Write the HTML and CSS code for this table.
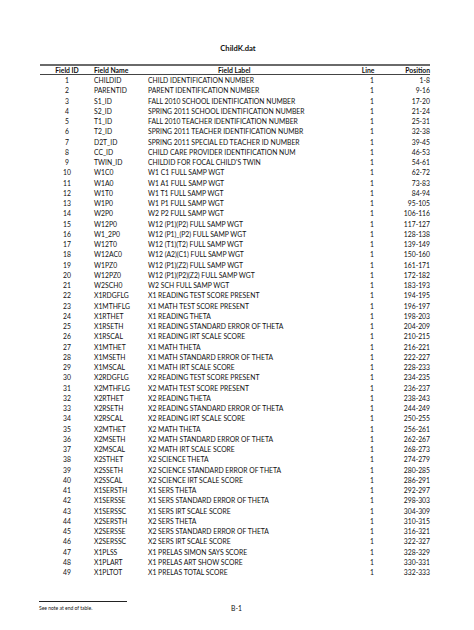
FILE: index.html
```html
<!DOCTYPE html>
<html>
<head>
<meta charset="utf-8">
<link rel="stylesheet" href="styles.css">
</head>
<body>
<div class="page">
  <h1 class="title">ChildK.dat</h1>
  <table class="layout">
    <colgroup>
      <col class="c-id"><col class="c-name"><col class="c-label"><col class="c-line"><col class="c-pos">
    </colgroup>
    <thead>
      <tr><th class="id">Field ID</th><th class="name">Field Name</th><th class="label">Field Label</th><th class="line">Line</th><th class="pos">Position</th></tr>
    </thead>
    <tbody>
      <tr><td class="id">1</td><td class="name">CHILDID</td><td class="label">CHILD IDENTIFICATION NUMBER</td><td class="line">1</td><td class="pos">1-8</td></tr>
      <tr><td class="id">2</td><td class="name">PARENTID</td><td class="label">PARENT IDENTIFICATION NUMBER</td><td class="line">1</td><td class="pos">9-16</td></tr>
      <tr><td class="id">3</td><td class="name">S1_ID</td><td class="label">FALL 2010 SCHOOL IDENTIFICATION NUMBER</td><td class="line">1</td><td class="pos">17-20</td></tr>
      <tr><td class="id">4</td><td class="name">S2_ID</td><td class="label">SPRING 2011 SCHOOL IDENTIFICATION NUMBER</td><td class="line">1</td><td class="pos">21-24</td></tr>
      <tr><td class="id">5</td><td class="name">T1_ID</td><td class="label">FALL 2010 TEACHER IDENTIFICATION NUMBER</td><td class="line">1</td><td class="pos">25-31</td></tr>
      <tr><td class="id">6</td><td class="name">T2_ID</td><td class="label">SPRING 2011 TEACHER IDENTIFICATION NUMBR</td><td class="line">1</td><td class="pos">32-38</td></tr>
      <tr><td class="id">7</td><td class="name">D2T_ID</td><td class="label">SPRING 2011 SPECIAL ED TEACHER ID NUMBER</td><td class="line">1</td><td class="pos">39-45</td></tr>
      <tr><td class="id">8</td><td class="name">CC_ID</td><td class="label">CHILD CARE PROVIDER IDENTIFICATION NUM</td><td class="line">1</td><td class="pos">46-53</td></tr>
      <tr><td class="id">9</td><td class="name">TWIN_ID</td><td class="label">CHILDID FOR FOCAL CHILD'S TWIN</td><td class="line">1</td><td class="pos">54-61</td></tr>
      <tr><td class="id">10</td><td class="name">W1C0</td><td class="label">W1 C1 FULL SAMP WGT</td><td class="line">1</td><td class="pos">62-72</td></tr>
      <tr><td class="id">11</td><td class="name">W1A0</td><td class="label">W1 A1 FULL SAMP WGT</td><td class="line">1</td><td class="pos">73-83</td></tr>
      <tr><td class="id">12</td><td class="name">W1T0</td><td class="label">W1 T1 FULL SAMP WGT</td><td class="line">1</td><td class="pos">84-94</td></tr>
      <tr><td class="id">13</td><td class="name">W1P0</td><td class="label">W1 P1 FULL SAMP WGT</td><td class="line">1</td><td class="pos">95-105</td></tr>
      <tr><td class="id">14</td><td class="name">W2P0</td><td class="label">W2 P2 FULL SAMP WGT</td><td class="line">1</td><td class="pos">106-116</td></tr>
      <tr><td class="id">15</td><td class="name">W12P0</td><td class="label">W12 (P1)(P2) FULL SAMP WGT</td><td class="line">1</td><td class="pos">117-127</td></tr>
      <tr><td class="id">16</td><td class="name">W1_2P0</td><td class="label">W12 (P1)_(P2) FULL SAMP WGT</td><td class="line">1</td><td class="pos">128-138</td></tr>
      <tr><td class="id">17</td><td class="name">W12T0</td><td class="label">W12 (T1)(T2) FULL SAMP WGT</td><td class="line">1</td><td class="pos">139-149</td></tr>
      <tr><td class="id">18</td><td class="name">W12AC0</td><td class="label">W12 (A2)(C1) FULL SAMP WGT</td><td class="line">1</td><td class="pos">150-160</td></tr>
      <tr><td class="id">19</td><td class="name">W1PZ0</td><td class="label">W12 (P1)(Z2) FULL SAMP WGT</td><td class="line">1</td><td class="pos">161-171</td></tr>
      <tr><td class="id">20</td><td class="name">W12PZ0</td><td class="label">W12 (P1)(P2)(Z2) FULL SAMP WGT</td><td class="line">1</td><td class="pos">172-182</td></tr>
      <tr><td class="id">21</td><td class="name">W2SCH0</td><td class="label">W2 SCH FULL SAMP WGT</td><td class="line">1</td><td class="pos">183-193</td></tr>
      <tr><td class="id">22</td><td class="name">X1RDGFLG</td><td class="label">X1 READING TEST SCORE PRESENT</td><td class="line">1</td><td class="pos">194-195</td></tr>
      <tr><td class="id">23</td><td class="name">X1MTHFLG</td><td class="label">X1 MATH TEST SCORE PRESENT</td><td class="line">1</td><td class="pos">196-197</td></tr>
      <tr><td class="id">24</td><td class="name">X1RTHET</td><td class="label">X1 READING THETA</td><td class="line">1</td><td class="pos">198-203</td></tr>
      <tr><td class="id">25</td><td class="name">X1RSETH</td><td class="label">X1 READING STANDARD ERROR OF THETA</td><td class="line">1</td><td class="pos">204-209</td></tr>
      <tr><td class="id">26</td><td class="name">X1RSCAL</td><td class="label">X1 READING IRT SCALE SCORE</td><td class="line">1</td><td class="pos">210-215</td></tr>
      <tr><td class="id">27</td><td class="name">X1MTHET</td><td class="label">X1 MATH THETA</td><td class="line">1</td><td class="pos">216-221</td></tr>
      <tr><td class="id">28</td><td class="name">X1MSETH</td><td class="label">X1 MATH STANDARD ERROR OF THETA</td><td class="line">1</td><td class="pos">222-227</td></tr>
      <tr><td class="id">29</td><td class="name">X1MSCAL</td><td class="label">X1 MATH IRT SCALE SCORE</td><td class="line">1</td><td class="pos">228-233</td></tr>
      <tr><td class="id">30</td><td class="name">X2RDGFLG</td><td class="label">X2 READING TEST SCORE PRESENT</td><td class="line">1</td><td class="pos">234-235</td></tr>
      <tr><td class="id">31</td><td class="name">X2MTHFLG</td><td class="label">X2 MATH TEST SCORE PRESENT</td><td class="line">1</td><td class="pos">236-237</td></tr>
      <tr><td class="id">32</td><td class="name">X2RTHET</td><td class="label">X2 READING THETA</td><td class="line">1</td><td class="pos">238-243</td></tr>
      <tr><td class="id">33</td><td class="name">X2RSETH</td><td class="label">X2 READING STANDARD ERROR OF THETA</td><td class="line">1</td><td class="pos">244-249</td></tr>
      <tr><td class="id">34</td><td class="name">X2RSCAL</td><td class="label">X2 READING IRT SCALE SCORE</td><td class="line">1</td><td class="pos">250-255</td></tr>
      <tr><td class="id">35</td><td class="name">X2MTHET</td><td class="label">X2 MATH THETA</td><td class="line">1</td><td class="pos">256-261</td></tr>
      <tr><td class="id">36</td><td class="name">X2MSETH</td><td class="label">X2 MATH STANDARD ERROR OF THETA</td><td class="line">1</td><td class="pos">262-267</td></tr>
      <tr><td class="id">37</td><td class="name">X2MSCAL</td><td class="label">X2 MATH IRT SCALE SCORE</td><td class="line">1</td><td class="pos">268-273</td></tr>
      <tr><td class="id">38</td><td class="name">X2STHET</td><td class="label">X2 SCIENCE THETA</td><td class="line">1</td><td class="pos">274-279</td></tr>
      <tr><td class="id">39</td><td class="name">X2SSETH</td><td class="label">X2 SCIENCE STANDARD ERROR OF THETA</td><td class="line">1</td><td class="pos">280-285</td></tr>
      <tr><td class="id">40</td><td class="name">X2SSCAL</td><td class="label">X2 SCIENCE IRT SCALE SCORE</td><td class="line">1</td><td class="pos">286-291</td></tr>
      <tr><td class="id">41</td><td class="name">X1SERSTH</td><td class="label">X1 SERS THETA</td><td class="line">1</td><td class="pos">292-297</td></tr>
      <tr><td class="id">42</td><td class="name">X1SERSSE</td><td class="label">X1 SERS STANDARD ERROR OF THETA</td><td class="line">1</td><td class="pos">298-303</td></tr>
      <tr><td class="id">43</td><td class="name">X1SERSSC</td><td class="label">X1 SERS IRT SCALE SCORE</td><td class="line">1</td><td class="pos">304-309</td></tr>
      <tr><td class="id">44</td><td class="name">X2SERSTH</td><td class="label">X2 SERS THETA</td><td class="line">1</td><td class="pos">310-315</td></tr>
      <tr><td class="id">45</td><td class="name">X2SERSSE</td><td class="label">X2 SERS STANDARD ERROR OF THETA</td><td class="line">1</td><td class="pos">316-321</td></tr>
      <tr><td class="id">46</td><td class="name">X2SERSSC</td><td class="label">X2 SERS IRT SCALE SCORE</td><td class="line">1</td><td class="pos">322-327</td></tr>
      <tr><td class="id">47</td><td class="name">X1PLSS</td><td class="label">X1 PRELAS SIMON SAYS SCORE</td><td class="line">1</td><td class="pos">328-329</td></tr>
      <tr><td class="id">48</td><td class="name">X1PLART</td><td class="label">X1 PRELAS ART SHOW SCORE</td><td class="line">1</td><td class="pos">330-331</td></tr>
      <tr><td class="id">49</td><td class="name">X1PLTOT</td><td class="label">X1 PRELAS TOTAL SCORE</td><td class="line">1</td><td class="pos">332-333</td></tr>
    </tbody>
  </table>
  <div class="footer">
    <div class="note">
      <div class="rule"></div>
      <p class="note-text">See note at end of table.</p>
    </div>
    <p class="page-no">B-1</p>
  </div>
</div>
</body>
</html>
```

FILE: styles.css
```css
html, body {
  margin: 0;
  padding: 0;
  background: #ffffff;
}
.page {
  width: 474px;
  height: 630px;
  font-family: Lato, "Open Sans", sans-serif;
  color: #111111;
  display: flex;
  flex-direction: column;
}
.title {
  margin: 43px 0 0 0;
  font-size: 7.6px;
  line-height: 10px;
  font-weight: 700;
  text-align: center;
  padding-left: 2px;
}
.layout {
  margin: 11px 0 0 40px;
  width: 390px;
  border-collapse: collapse;
  table-layout: fixed;
  font-size: 6.8px;
  border-top: 2px solid #6a6a6a;
}
.c-id { width: 54px; }
.c-name { width: 54px; }
.c-label { width: 204px; }
.c-line { width: 40px; }
.c-pos { width: 38px; }
.layout th, .layout td {
  padding: 0;
  white-space: nowrap;
  overflow: visible;
}
.layout thead tr {
  height: 8px;
}
.layout th {
  font-weight: 700;
  line-height: 8px;
  border-bottom: 1px solid #444;
  vertical-align: middle;
}
.layout tbody tr {
  height: 10.25px;
}
.layout td {
  line-height: 10.25px;
  height: 10.25px;
}
.id { text-align: center; }
.name { text-align: left; padding-left: 1px; }
.label { text-align: left; padding-left: 1px; }
th.label { padding-left: 70px; }
.line { text-align: center; }
th.line { padding-right: 8px; }
.pos { text-align: right; }
.footer {
  margin: 24px 0 0 39px;
  display: flex;
  align-items: flex-end;
}
.note {
  width: 88px;
  display: flex;
  flex-direction: column;
}
.rule {
  height: 0;
  border-top: 1px solid #222;
}
.note-text {
  margin: 3px 0 0 0;
  font-size: 5px;
  line-height: 7px;
}
.page-no {
  margin: 0 0 0 104px;
  font-size: 6.8px;
  line-height: 7px;
}
```
